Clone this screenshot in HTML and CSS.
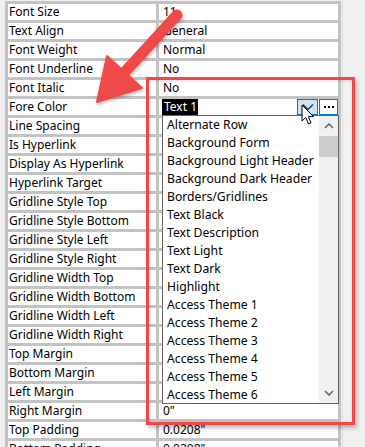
FILE: index.html
```html
<!DOCTYPE html>
<html>
<head>
<meta charset="utf-8">
<link rel="stylesheet" href="styles.css">
</head>
<body>
<div class="page">
  <div class="sheet">
    <div class="row"><div class="cell name">Font Size</div><div class="cell val">11</div></div>
    <div class="row"><div class="cell name">Text Align</div><div class="cell val">General</div></div>
    <div class="row"><div class="cell name">Font Weight</div><div class="cell val">Normal</div></div>
    <div class="row"><div class="cell name">Font Underline</div><div class="cell val">No</div></div>
    <div class="row"><div class="cell name">Font Italic</div><div class="cell val">No</div></div>
    <div class="row"><div class="cell name">Fore Color</div><div class="cell val active"><span class="sel">Text 1</span><span class="ddbtn"><svg width="12" height="8" viewBox="0 0 12 8"><path d="M1 1.5 L6 6.5 L11 1.5" fill="none" stroke="#333" stroke-width="1.3"/></svg></span><span class="dots"><svg width="10" height="3" viewBox="0 0 10 3"><rect x="0" y="0" width="2" height="2" fill="#000"/><rect x="4" y="0" width="2" height="2" fill="#000"/><rect x="8" y="0" width="2" height="2" fill="#000"/></svg></span></div></div>
    <div class="row"><div class="cell name">Line Spacing</div><div class="cell val"></div></div>
    <div class="row"><div class="cell name">Is Hyperlink</div><div class="cell val"></div></div>
    <div class="row"><div class="cell name">Display As Hyperlink</div><div class="cell val"></div></div>
    <div class="row"><div class="cell name">Hyperlink Target</div><div class="cell val"></div></div>
    <div class="row"><div class="cell name">Gridline Style Top</div><div class="cell val"></div></div>
    <div class="row"><div class="cell name">Gridline Style Bottom</div><div class="cell val"></div></div>
    <div class="row"><div class="cell name">Gridline Style Left</div><div class="cell val"></div></div>
    <div class="row"><div class="cell name">Gridline Style Right</div><div class="cell val"></div></div>
    <div class="row"><div class="cell name">Gridline Width Top</div><div class="cell val"></div></div>
    <div class="row"><div class="cell name">Gridline Width Bottom</div><div class="cell val"></div></div>
    <div class="row"><div class="cell name">Gridline Width Left</div><div class="cell val"></div></div>
    <div class="row"><div class="cell name">Gridline Width Right</div><div class="cell val"></div></div>
    <div class="row"><div class="cell name">Top Margin</div><div class="cell val"></div></div>
    <div class="row"><div class="cell name">Bottom Margin</div><div class="cell val"></div></div>
    <div class="row"><div class="cell name">Left Margin</div><div class="cell val"></div></div>
    <div class="row"><div class="cell name">Right Margin</div><div class="cell val">0"</div></div>
    <div class="row"><div class="cell name">Top Padding</div><div class="cell val">0.0208"</div></div>
    <div class="row"><div class="cell name">Bottom Padding</div><div class="cell val">0.0208"</div></div>
  </div>
  <div class="side"></div>

  <div class="list">
    <div class="items">
      <div class="item">Alternate Row</div>
      <div class="item">Background Form</div>
      <div class="item">Background Light Header</div>
      <div class="item">Background Dark Header</div>
      <div class="item">Borders/Gridlines</div>
      <div class="item">Text Black</div>
      <div class="item">Text Description</div>
      <div class="item">Text Light</div>
      <div class="item">Text Dark</div>
      <div class="item">Highlight</div>
      <div class="item">Access Theme 1</div>
      <div class="item">Access Theme 2</div>
      <div class="item">Access Theme 3</div>
      <div class="item">Access Theme 4</div>
      <div class="item">Access Theme 5</div>
      <div class="item">Access Theme 6</div>
    </div>
    <div class="scroll">
      <svg class="sarrow" width="10" height="6" viewBox="0 0 10 6"><path d="M1 5 L5 1 L9 5" fill="none" stroke="#606060" stroke-width="1.5"/></svg>
      <div class="thumb"></div>
      <div class="track"></div>
      <svg class="sarrow" width="10" height="6" viewBox="0 0 10 6"><path d="M1 1 L5 5 L9 1" fill="none" stroke="#606060" stroke-width="1.5"/></svg>
    </div>
  </div>

  <div class="redbox"></div>

  <svg class="arrow" width="365" height="447" viewBox="0 0 365 447">
    <defs>
      <filter id="sh" x="-20%" y="-20%" width="140%" height="140%">
        <feDropShadow dx="1" dy="2" stdDeviation="1.5" flood-color="#000" flood-opacity="0.25"/>
      </filter>
    </defs>
    <g filter="url(#sh)">
      <line x1="177" y1="15" x2="124" y2="73" stroke="#f04848" stroke-width="11" stroke-linecap="round"/>
      <polygon points="97,102 107,56 142,88" fill="#f04848" stroke="#f04848" stroke-width="2" stroke-linejoin="round"/>
    </g>
  </svg>

  <svg class="cursor" width="14" height="22" viewBox="0 0 14 22">
    <path d="M1 1 L1 17 L4.8 13.5 L7.5 20 L10 19 L7.4 12.6 L12.5 12.6 Z" fill="#fff" stroke="#000" stroke-width="1" stroke-linejoin="miter"/>
  </svg>
</div>
</body>
</html>
```
FILE: styles.css
```css
html, body {
  margin: 0;
  padding: 0;
}
body {
  width: 365px;
  height: 447px;
  overflow: hidden;
  background: #f0f0f0;
  font-family: "Noto Sans", "Open Sans", sans-serif;
  font-size: 12px;
  color: #000;
}
.page {
  position: relative;
  width: 365px;
  height: 447px;
  overflow: hidden;
  display: flex;
  align-items: flex-start;
  padding-left: 5px;
  padding-top: 1px;
  box-sizing: border-box;
}
.sheet {
  width: 336px;
  background: #c3c3c3;
  padding: 3px 3px 0 3px;
  box-sizing: border-box;
  display: flex;
  flex-direction: column;
  gap: 3px;
  flex: none;
}
.row {
  display: grid;
  grid-template-columns: 148px 1fr;
  column-gap: 3px;
  height: 16px;
}
.cell {
  background: #fff;
  height: 16px;
  line-height: 16px;
  white-space: nowrap;
  overflow: hidden;
}
.name {
  padding-left: 1px;
}
.val {
  padding-left: 4px;
  display: flex;
  align-items: stretch;
}
.sel {
  background: #000;
  color: #fff;
  padding: 0 2px;
  margin-left: -1px;
  width: 32px;
}
.ddbtn {
  margin-left: auto;
  width: 19px;
  height: 14px;
  border: 1px solid #0078d7;
  background: #cce4f7;
  display: flex;
  align-items: center;
  justify-content: center;
  box-sizing: content-box;
}
.dots {
  width: 17px;
  height: 14px;
  margin-left: 1px;
  border: 1px solid #0078d7;
  background: #fff;
  display: flex;
  align-items: center;
  justify-content: center;
}
.side {
  flex: 1;
  align-self: stretch;
  background: #f0f0f0;
  border-left: 1px solid #e0e0e0;
  margin-left: 1px;
}
.list {
  position: absolute;
  left: 162px;
  top: 115px;
  width: 177px;
  height: 289px;
  border: 1px solid #646464;
  box-sizing: border-box;
  background: #fff;
  display: flex;
}
.items {
  flex: 1;
}
.item {
  height: 18px;
  line-height: 18px;
  padding-left: 4px;
  white-space: nowrap;
  font-size: 12.2px;
}
.scroll {
  width: 19px;
  background: #f0f0f0;
  display: flex;
  flex-direction: column;
  align-items: center;
}
.sarrow {
  margin: 7px 0 7px;
  flex: none;
}
.thumb {
  width: 19px;
  height: 21px;
  background: #cdcdcd;
  flex: none;
}
.track {
  flex: 1;
}
.redbox {
  position: absolute;
  left: 146px;
  top: 77px;
  width: 209px;
  height: 348px;
  box-sizing: border-box;
  border: 3px solid #f04848;
  box-shadow: 2px 3px 4px rgba(0,0,0,0.25), inset 1px 1px 3px rgba(0,0,0,0.15);
}
.arrow {
  position: absolute;
  left: 0;
  top: 0;
  pointer-events: none;
}
.cursor {
  position: absolute;
  left: 301px;
  top: 104px;
}
```
